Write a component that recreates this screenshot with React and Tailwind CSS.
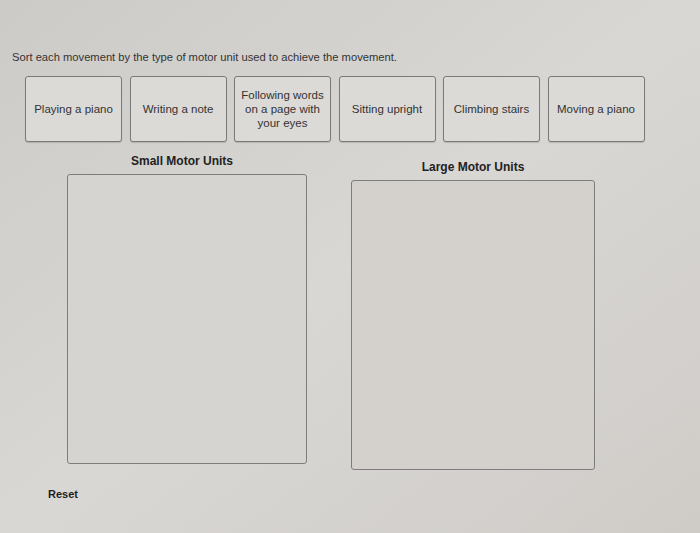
import React from 'react';

const movements = [
  'Playing a piano',
  'Writing a note',
  'Following words on a page with your eyes',
  'Sitting upright',
  'Climbing stairs',
  'Moving a piano',
];

const App = () => {
  return (
    <div
      className="w-[700px] h-[533px] overflow-hidden bg-gradient-to-br from-[#cdcbc8] via-[#d9d7d4] to-[#cfccc8] text-[#2e2e2e]"
      style={{ fontFamily: '"Liberation Sans", Arial, sans-serif' }}
    >
      {/* Instructions */}
      <p className="pt-[49px] pl-[12px] text-[11.2px] text-[#333]">
        Sort each movement by the type of motor unit used to achieve the movement.
      </p>

      {/* Draggable items */}
      <div className="flex gap-[7.5px] pl-[25px] mt-[10px]">
        {movements.map((m) => (
          <div
            key={m}
            className="w-[97px] h-[66px] flex items-center justify-center text-center px-[4px] text-[11.5px] leading-[14px] text-[#333] border border-[#7a7a7a] rounded-[3px] bg-[#dcdad7] shadow-[0_1px_1px_rgba(0,0,0,0.15)]"
          >
            {m}
          </div>
        ))}
      </div>

      {/* Drop zones */}
      <div className="flex gap-[44px] pl-[67px] mt-[10px]">
        <div className="flex flex-col items-center w-[240px]">
          <h2 className="text-[12px] font-bold text-[#222] h-[18px] -ml-[10px]">Small Motor Units</h2>
          <div className="mt-[4px] w-full h-[290px] border border-[#7d7d7d] rounded-[3px] bg-[#d6d4d1]"></div>
        </div>
        <div className="flex flex-col items-center w-[244px]">
          <h2 className="text-[12px] font-bold text-[#222] h-[18px] mt-[6px]">Large Motor Units</h2>
          <div className="mt-[4px] w-full h-[290px] border border-[#7d7d7d] rounded-[3px] bg-[#d4d1cd]"></div>
        </div>
      </div>

      {/* Reset */}
      <button className="ml-[48px] mt-[16px] text-[11px] font-bold text-[#1e1e1e]">Reset</button>
    </div>
  );
};

export default App;
